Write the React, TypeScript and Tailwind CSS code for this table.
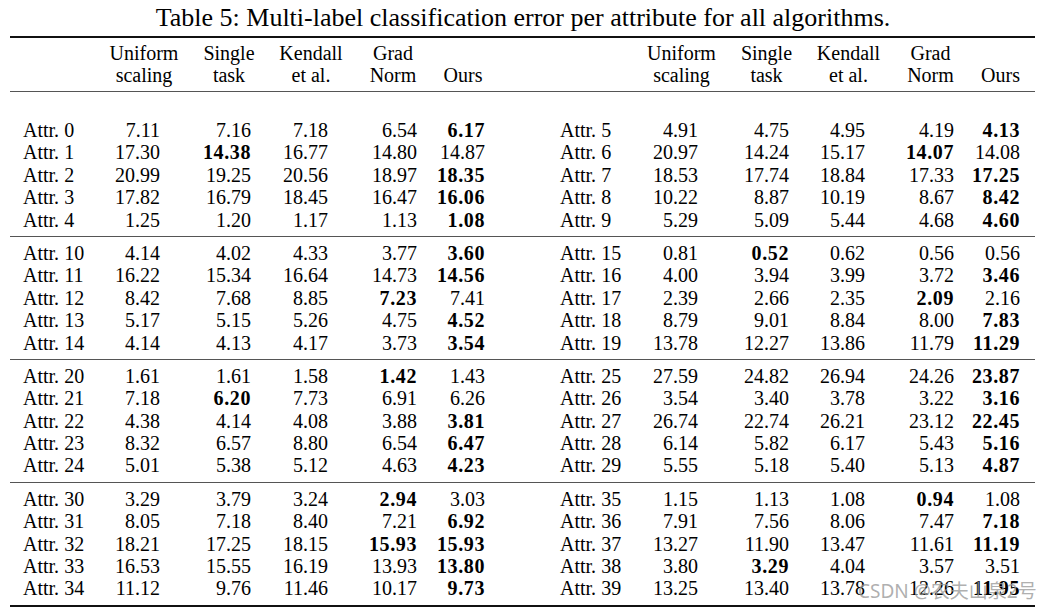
const serif = { fontFamily: '"Liberation Serif", "Times New Roman", serif' }

// "*" marks the best (bold) value of a row
const rows: string[][] = [
  ["7.11", "7.16", "7.18", "6.54", "*6.17"],
  ["17.30", "*14.38", "16.77", "14.80", "14.87"],
  ["20.99", "19.25", "20.56", "18.97", "*18.35"],
  ["17.82", "16.79", "18.45", "16.47", "*16.06"],
  ["1.25", "1.20", "1.17", "1.13", "*1.08"],
  ["4.91", "4.75", "4.95", "4.19", "*4.13"],
  ["20.97", "14.24", "15.17", "*14.07", "14.08"],
  ["18.53", "17.74", "18.84", "17.33", "*17.25"],
  ["10.22", "8.87", "10.19", "8.67", "*8.42"],
  ["5.29", "5.09", "5.44", "4.68", "*4.60"],
  ["4.14", "4.02", "4.33", "3.77", "*3.60"],
  ["16.22", "15.34", "16.64", "14.73", "*14.56"],
  ["8.42", "7.68", "8.85", "*7.23", "7.41"],
  ["5.17", "5.15", "5.26", "4.75", "*4.52"],
  ["4.14", "4.13", "4.17", "3.73", "*3.54"],
  ["0.81", "*0.52", "0.62", "0.56", "0.56"],
  ["4.00", "3.94", "3.99", "3.72", "*3.46"],
  ["2.39", "2.66", "2.35", "*2.09", "2.16"],
  ["8.79", "9.01", "8.84", "8.00", "*7.83"],
  ["13.78", "12.27", "13.86", "11.79", "*11.29"],
  ["1.61", "1.61", "1.58", "*1.42", "1.43"],
  ["7.18", "*6.20", "7.73", "6.91", "6.26"],
  ["4.38", "4.14", "4.08", "3.88", "*3.81"],
  ["8.32", "6.57", "8.80", "6.54", "*6.47"],
  ["5.01", "5.38", "5.12", "4.63", "*4.23"],
  ["27.59", "24.82", "26.94", "24.26", "*23.87"],
  ["3.54", "3.40", "3.78", "3.22", "*3.16"],
  ["26.74", "22.74", "26.21", "23.12", "*22.45"],
  ["6.14", "5.82", "6.17", "5.43", "*5.16"],
  ["5.55", "5.18", "5.40", "5.13", "*4.87"],
  ["3.29", "3.79", "3.24", "*2.94", "3.03"],
  ["8.05", "7.18", "8.40", "7.21", "*6.92"],
  ["18.21", "17.25", "18.15", "*15.93", "*15.93"],
  ["16.53", "15.55", "16.19", "13.93", "*13.80"],
  ["11.12", "9.76", "11.46", "10.17", "*9.73"],
  ["1.15", "1.13", "1.08", "*0.94", "1.08"],
  ["7.91", "7.56", "8.06", "7.47", "*7.18"],
  ["13.27", "11.90", "13.47", "11.61", "*11.19"],
  ["3.80", "*3.29", "4.04", "3.57", "3.51"],
  ["13.25", "13.40", "13.78", "12.26", "*11.95"],
]

const headers = [
  ["Uniform", "scaling"],
  ["Single", "task"],
  ["Kendall", "et al."],
  ["Grad", "Norm"],
  ["", "Ours"],
]

const bodyCols =
  "grid grid-cols-[105px_45px_91px_77px_89px_68px_62px_105px_46px_91px_76px_89px_66px_15px]"

function Cells({ idx }: { idx: number }) {
  return (
    <>
      <div className="pl-[13px]">Attr. {idx}</div>
      {rows[idx].map((v, i) =>
        v.startsWith("*") ? (
          <div key={i} className="text-right font-bold tracking-[0.6px]">
            {v.slice(1)}
          </div>
        ) : (
          <div key={i} className="text-right">
            {v}
          </div>
        )
      )}
    </>
  )
}

function Group({ g, first }: { g: number; first?: boolean }) {
  const lines = [0, 1, 2, 3, 4]
  return (
    <div className={first ? "pt-[27px] pb-[5px]" : "pt-[5px] pb-[5px]"}>
      {lines.map((l) => (
        <div key={l} className={`${bodyCols} h-[22.4px] leading-[22.4px]`}>
          <Cells idx={g * 10 + l} />
          <div />
          <Cells idx={g * 10 + 5 + l} />
          <div />
        </div>
      ))}
    </div>
  )
}

export default function App() {
  return (
    <div className="relative w-[1058px] h-[613px] bg-white text-black overflow-hidden" style={serif}>
      <h1 className="text-center text-[26px] leading-[36px] pr-[12px]">
        Table 5: Multi-label classification error per attribute for all algorithms.
      </h1>

      <div className="ml-[10px] w-[1025px] text-[20px]">
        <div className="h-[2px] bg-[#111]" />

        {/* header */}
        <div className="grid grid-cols-[92px_84px_86px_78px_86px_54px_150px_83px_87px_77px_87px_53px_8px] pt-[4px] pb-[5px] leading-[22px]">
          <div />
          {headers.map((h, i) => (
            <div key={"l" + i} className="text-center">
              <div className="h-[22px]">{h[0]}</div>
              <div>{h[1]}</div>
            </div>
          ))}
          <div />
          {headers.map((h, i) => (
            <div key={"r" + i} className="text-center">
              <div className="h-[22px]">{h[0]}</div>
              <div>{h[1]}</div>
            </div>
          ))}
          <div />
        </div>
        <div className="h-[1px] bg-[#555]" />

        <Group g={0} first />
        <div className="h-[1px] bg-[#555]" />
        <Group g={1} />
        <div className="h-[1px] bg-[#555]" />
        <Group g={2} />
        <div className="h-[1px] bg-[#555]" />
        <Group g={3} />
        <div className="h-[2px] bg-[#111]" />
      </div>

      {/* watermark */}
      <div
        className="absolute left-[858px] top-[579px] text-[19px] text-[#9a9a9a]/80 leading-[24px]"
        style={{ fontFamily: '"Noto Sans", "Noto Sans CJK SC", sans-serif' }}
      >
        CSDN @农夫山泉2号
      </div>
    </div>
  )
}
